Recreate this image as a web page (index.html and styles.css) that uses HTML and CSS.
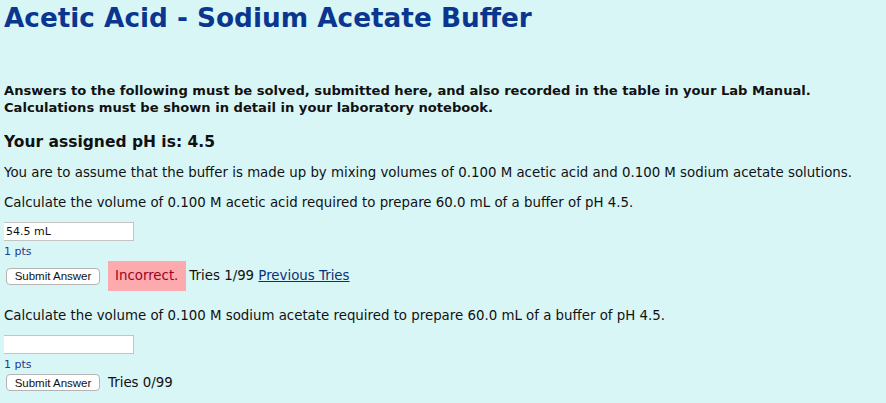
FILE: index.html
```html
<!DOCTYPE html>
<html lang="en">
  <head>
    <meta charset="UTF-8" />
    <title>Acetic Acid - Sodium Acetate Buffer</title>
    <link rel="stylesheet" href="styles.css">
  </head>
  <body>
    <h1 class="title">Acetic Acid - Sodium Acetate Buffer</h1>

    <p class="notice">
      Answers to the following must be solved, submitted here, and also recorded in the table in your Lab Manual.<br />
      Calculations must be shown in detail in your laboratory notebook.
    </p>

    <h3 class="assigned">Your assigned pH is: 4.5</h3>

    <p>You are to assume that the buffer is made up by mixing volumes of 0.100 M acetic acid and 0.100 M sodium acetate solutions.</p>

    <div class="problem">
      <p>Calculate the volume of 0.100 M acetic acid required to prepare 60.0 mL of a buffer of pH 4.5.</p>
      <input type="text" class="answer" value="54.5 mL" />
      <div class="pts">1 pts</div>
      <div class="submitRow">
        <button class="submit">Submit Answer</button>
        <span class="incorrect">Incorrect.</span>
        <span class="tries">Tries 1/99 <a href="#">Previous Tries</a></span>
      </div>
    </div>

    <div class="problem">
      <p>Calculate the volume of 0.100 M sodium acetate required to prepare 60.0 mL of a buffer of pH 4.5.</p>
      <input type="text" class="answer" value="" />
      <div class="pts">1 pts</div>
      <div class="submitRow">
        <button class="submit">Submit Answer</button>
        <span class="tries">Tries 0/99</span>
      </div>
    </div>
  </body>
</html>
```

FILE: styles.css
```css
body {
  font-family: "DejaVu Sans", Verdana, sans-serif;
  font-size: 13.35px;
  color: #111;
  background-color: #d9f6f6;
  margin: 0 4px;
}

.title {
  font-size: 26.3px;
  color: #0a368f;
  margin: 2px 0 0 0;
  line-height: 32px;
}

.notice {
  font-size: 13.1px;
  font-weight: bold;
  line-height: 17px;
  margin: 48px 0 0 0;
}

.assigned {
  font-size: 15.5px;
  margin: 16px 0 0 0;
  line-height: 20px;
}

p {
  margin: 12px 0 0 0;
  line-height: 17px;
}

.problem {
  padding-bottom: 3px;
}

.problem p {
  margin-top: 13px;
}

.answer {
  display: block;
  margin: 11px 0 0 -1px;
  width: 131px;
  height: 19px;
  box-sizing: border-box;
  border: 1px solid #c4c4c4;
  background: #fff;
  font-family: inherit;
  font-size: 11px;
  padding: 0 2px;
  color: #111;
}

.pts {
  font-size: 11px;
  color: #1f3a8f;
  line-height: 15px;
  margin-top: 3px;
}

.submitRow {
  display: flex;
  align-items: baseline;
  margin-top: 2px;
}

.submit {
  margin-left: 2px;
  width: 94px;
  height: 17px;
  padding: 0;
  font-family: "Liberation Sans", Arial, sans-serif;
  font-size: 11.5px;
  background: #fff;
  border: 1px solid #b4b4b4;
  border-radius: 4px;
  color: #111;
}

.incorrect {
  margin-left: 8px;
  background: #fcaaae;
  color: #a0001f;
  padding: 7px 8px 7px 7px;
  line-height: 16px;
}

.tries {
  margin-left: 8px;
}

.incorrect + .tries {
  margin-left: 3px;
}

.tries a {
  color: #0a3278;
}
```
